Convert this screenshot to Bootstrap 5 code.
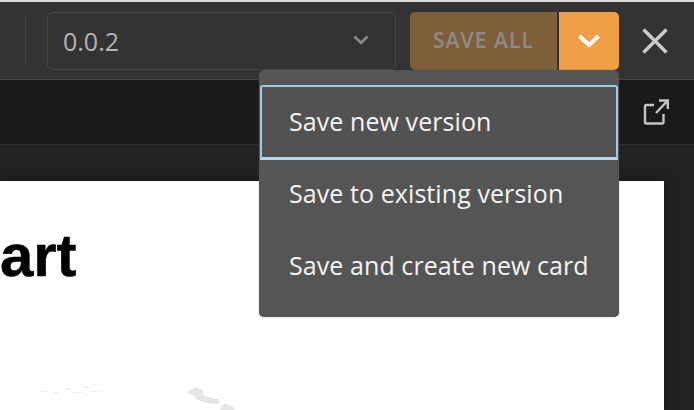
<!DOCTYPE html>
<html lang="en">
<head>
<meta charset="utf-8">
<title>Save menu</title>
<link href="https://cdn.jsdelivr.net/npm/bootstrap@5.3.0/dist/css/bootstrap.min.css" rel="stylesheet">
<style>
html,body{height:100%;margin:0;overflow:hidden;background:#222;font-family:"Open Sans",sans-serif}
.shell{height:410px;position:relative;overflow:hidden}
.top-strip{height:2px;background:#dcdcdc}
.tool-row{height:78px;background:#333;border-bottom:1px solid #444;padding:10px 25px 9px 25px}
.sep{width:1px;height:50px;background:#444;margin:4px 21px 0 0}
.ver-box{width:349px;height:58px;background:#333;border:1px solid #464646;border-radius:5px;padding:2px 26px 0 15px;color:#b4b4b4;font-size:25px}
.ver-chev{margin-bottom:5px}
.btn-group-save{margin-left:14px;height:58px}
.save-all{width:147px;height:58px;background:#7f5f39;border:0;border-radius:5px 0 0 5px;color:#8b8b8b;font-size:21px;font-weight:600;letter-spacing:1.1px;padding:0;margin-right:2px;display:flex;align-items:center;justify-content:center}
.save-arrow{width:60px;height:58px;background:#f09f45;border:0;border-radius:0 5px 5px 0;padding:0;display:flex;align-items:center;justify-content:center}
.close-x{margin:16px 0 0 23px;background:none;border:0;padding:0;display:flex;line-height:0}
.sub-bar{height:65px;background:#1a1a1a;border-bottom:1px solid #303030;padding:0 25px 0 0}
.strip-3{height:36px;background:#222}
.stage{height:229px;display:flex}
.sheet{width:664px;background:#fff;box-shadow:0 0 12px rgba(0,0,0,.35);position:relative;padding:47px 0 0 0}
.head-txt{font-family:"Liberation Sans",sans-serif;font-weight:700;font-size:60px;line-height:56px;letter-spacing:-.1px;color:#000;margin:0;-webkit-text-stroke:.5px #000}
.specks{display:block;margin:98px 0 0 39px}
.menu-pop.dropdown-menu{position:absolute;display:block;top:70px;left:259px;width:360px;height:247px;background:#555;border:0;border-radius:5px;padding:15px 1px 0 1px;margin:0;box-shadow:0 0 1px #333}
.menu-pop .dropdown-item{height:72px;color:#f4f4f4;font-size:25px;padding:0 29px 4px;display:flex;align-items:center;background:#555;letter-spacing:.08px}
.menu-pop .dropdown-item.sel{height:75px;border:2px solid #9cc8ea;border-bottom:3px solid #b6d6ef;border-radius:3px;padding:0 27px 1px;box-shadow:0 1px 0 #f1f1f1;background:#525252;margin-bottom:0}
</style>
</head>
<body>
<div class="shell">
  <div class="top-strip"></div>
  <div class="tool-row d-flex align-items-start">
    <div class="sep"></div>
    <div class="ver-box d-flex align-items-center justify-content-between">
      <span>0.0.2</span>
      <svg class="ver-chev" width="16" height="10" viewBox="0 0 16 10" fill="none" stroke="#8a8a8a" stroke-width="2.6"><path d="M1.5 1.5 8 8l6.5-6.500"/></svg>
    </div>
    <div class="btn-group-save d-flex">
      <button type="button" class="btn save-all">SAVE ALL</button>
      <button type="button" class="btn save-arrow" aria-label="More save options">
        <svg width="22" height="14" viewBox="0 0 22 14" fill="none" stroke="#fff" stroke-width="4"><path d="M1.5 2 11 11l9.5-9"/></svg>
      </button>
    </div>
    <button type="button" class="close-x" aria-label="Close">
      <svg width="26" height="26" viewBox="0 0 26 26" fill="none" stroke="#cbcbcb" stroke-width="3.4"><path d="M1.5 1.5l23 23M24.5 1.5l-23 23"/></svg>
    </button>
  </div>
  <div class="sub-bar d-flex align-items-center justify-content-end">
    <svg width="26" height="26" viewBox="0 0 26 26" fill="none" stroke="#c4c4c4" stroke-width="2.4"><path d="M11 6H3.500A1.500 1.500 0 0 0 2 7.500V23a1.500 1.500 0 0 0 1.500 1.500H19a1.500 1.500 0 0 0 1.500-1.500V15M13 14 24.500 1.800M16 1.500h8.800V10"/></svg>
  </div>
  <div class="strip-3"></div>
  <div class="stage">
    <div class="sheet">
      <h1 class="head-txt">art</h1>
      <svg class="specks" width="210" height="30" viewBox="0 0 210 30" fill="#e6e6e6"><path d="M2 9h8v1H2zM14 10h6v1h-6zM26 6h5v2h-5zM34 10h8v1h-8zM44 4h6v2h-6zM50 9h8v1h-8zM60 8h7v1h-7zM46 12h5v1h-5z" fill="#f0f0f0"/><path d="M149 9l8-4 7 3 1 4-8 2-8-2zM156 14l8-1 8 3 7 1 2 4-7 1-10-2-8-3zM181 26l5-5 8 4 3 5h-15z"/></svg>
    </div>
  </div>
  <div class="dropdown-menu menu-pop show">
    <a class="dropdown-item sel" href="#">Save new version</a>
    <a class="dropdown-item" href="#">Save to existing version</a>
    <a class="dropdown-item" href="#">Save and create new card</a>
  </div>
</div>
<script src="https://cdn.jsdelivr.net/npm/bootstrap@5.3.0/dist/js/bootstrap.bundle.min.js"></script>
</body>
</html>
